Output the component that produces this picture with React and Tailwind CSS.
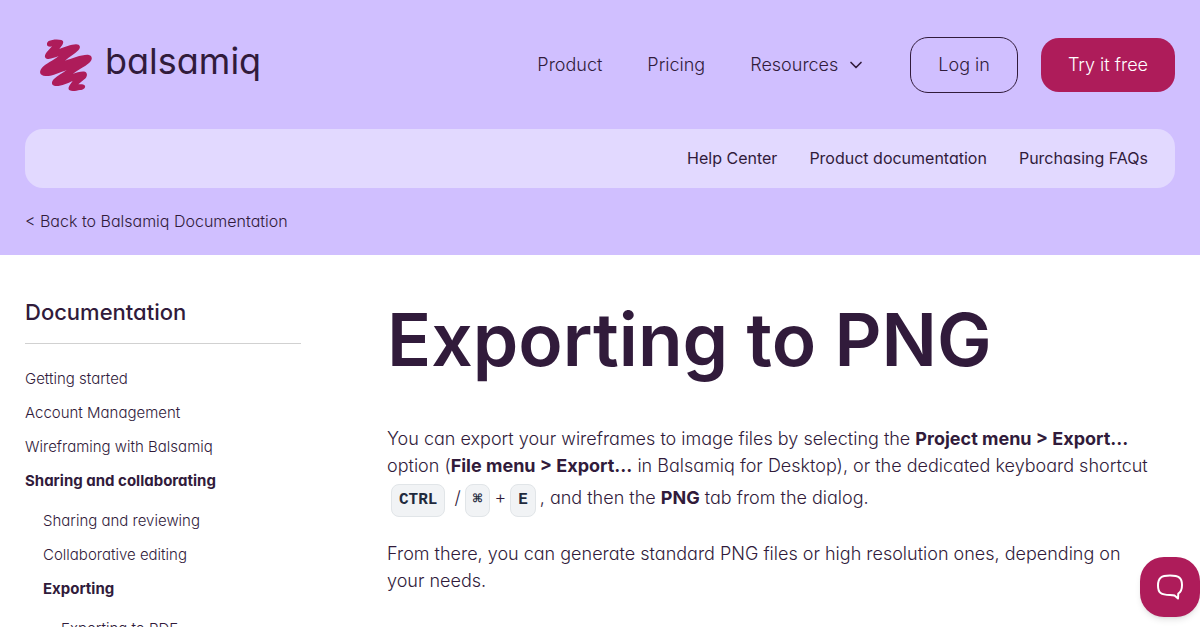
import { ChevronDown } from 'lucide-react';

const subNav = ['Help Center', 'Product documentation', 'Purchasing FAQs'];

function Logo() {
  return (
    <a href="#" className="flex items-center gap-[9px]">
      <svg viewBox="0 0 180 180" className="size-[60px]" fill="#ae1c5a" aria-hidden="true">
        <path d="M38 18 C48 13 66 12 76 15 C85 18 82 27 76 34 L70 42 C84 37 106 28 120 28 C133 28 135 38 127 46 C116 57 99 66 87 77 C107 70 137 58 156 59 C170 61 171 74 160 83 C146 96 126 103 110 117 C122 112 137 108 147 110 C156 114 154 126 145 133 L127 148 C134 147 143 147 147 152 C149 160 141 164 132 165 C122 167 108 170 101 166 C95 162 98 154 104 146 L110 138 C95 145 73 155 57 153 C46 150 45 141 54 132 C65 121 80 114 92 105 C74 112 45 125 28 123 C11 121 8 110 18 98 C29 86 51 77 68 63 C58 67 42 74 32 71 C24 68 26 60 32 52 L48 34 C42 36 34 35 33 29 C32 24 35 21 38 18 Z" />
      </svg>
      <span className="pb-2 text-[36px] leading-[48px]">balsamiq</span>
    </a>
  );
}

function Key({ children }) {
  return (
    <kbd className="mx-1 mt-[5px] inline-block rounded-lg border border-[#e1e5e8] bg-[#f1f3f5] px-[7px] py-0.5 font-['Liberation_Mono','DejaVu_Sans_Mono',monospace] text-base leading-[27px] font-bold text-[#1f2a3d]">
      {children}
    </kbd>
  );
}

function DocLink({ active, children }) {
  return (
    <a href="#" aria-current={active ? 'true' : undefined} className={active ? 'block font-bold' : 'block font-light'}>
      {children}
    </a>
  );
}

export default function App() {
  return (
    <div className="min-h-screen bg-white font-['Inter','Open_Sans',sans-serif] text-[#311b3b] [font-feature-settings:'cv11']">
      <header className="bg-[#d0bfff] px-[25px] pb-5">
        <div className="flex h-[129px] items-center justify-between pl-[11px]">
          <Logo />
          <nav className="flex items-center text-lg font-light" aria-label="Main">
            <div className="mr-11 flex items-center gap-[45px]">
              <a href="#">Product</a>
              <a href="#">Pricing</a>
              <button type="button" className="flex items-center gap-2">
                Resources <ChevronDown className="size-5" strokeWidth={2} />
              </button>
            </div>
            <div className="flex items-center gap-[23px]">
              <a href="#" className="rounded-[18px] border border-[#311b3b] px-[27px] py-[13px] leading-7">Log in</a>
              <a href="#" className="rounded-[18px] bg-[#ae1c5a] px-[27px] py-[13px] leading-7 text-white">Try it free</a>
            </div>
          </nav>
        </div>
        <nav className="flex h-[59px] items-center justify-end gap-8 rounded-[18px] bg-[#e2d9ff] px-[27px] pb-0.5" aria-label="Support">
          {subNav.map((item) => (
            <a key={item} href="#" className="text-base">{item}</a>
          ))}
        </nav>
        <a href="#" className="mt-5 inline-block text-base leading-[27px] font-light">&lt; Back to Balsamiq Documentation</a>
      </header>

      <div className="grid grid-cols-[24%_1fr] gap-[86px] px-[25px] pt-10">
        <aside>
          <h2 className="border-b border-[#d1d1d1] pb-[14px] text-[22px] leading-[34px] font-medium">Documentation</h2>
          <ul className="mt-6 flex flex-col gap-3 text-[15px] leading-[22px]">
            <li><DocLink>Getting started</DocLink></li>
            <li><DocLink>Account Management</DocLink></li>
            <li><DocLink>Wireframing with Balsamiq</DocLink></li>
            <li>
              <DocLink active>Sharing and collaborating</DocLink>
              <ul className="mt-[18px] flex flex-col gap-3 pl-[18px]">
                <li><DocLink>Sharing and reviewing</DocLink></li>
                <li><DocLink>Collaborative editing</DocLink></li>
                <li>
                  <DocLink active>Exporting</DocLink>
                  <ul className="mt-[18px] pl-[18px]">
                    <li><DocLink>Exporting to PDF</DocLink></li>
                  </ul>
                </li>
              </ul>
            </li>
          </ul>
        </aside>

        <main className="pr-[14px]">
          <h1 className="text-[73px] leading-[90px] font-semibold">Exporting to PNG</h1>
          <p className="mt-10 text-lg leading-[27px] font-light">
            You can export your wireframes to image files by selecting the <strong className="font-bold">Project menu &gt; Export…</strong>{' '}
            option (<strong className="font-bold">File menu &gt; Export…</strong> in Balsamiq for Desktop), or the dedicated keyboard shortcut{' '}
            <Key>CTRL</Key> /<Key>⌘</Key>+<Key>E</Key>, and then the <strong className="font-bold">PNG</strong> tab from the dialog.
          </p>
          <p className="mt-[23px] text-lg leading-[27px] font-light">
            From there, you can generate standard PNG files or high resolution ones, depending on your needs.
          </p>
        </main>
      </div>

      <button
        type="button"
        aria-label="Open chat"
        className="fixed right-0 bottom-[10px] flex size-[60px] items-center justify-center rounded-[24px] bg-[#ae1c5a] text-white shadow-md"
      >
        <svg viewBox="0 0 28 28" className="size-7" fill="none" stroke="currentColor" strokeWidth="2" strokeLinejoin="round" aria-hidden="true">
          <path d="M14 2.5 C5 2.5 2 5 2 12.5 C2 20 5 22 14 22 C16 22 17.5 22 18.5 22.5 L22 25.5 L22.3 20.5 C25 19 26 17 26 12 C26 5 23 2.5 14 2.5 Z" />
        </svg>
      </button>
    </div>
  );
}
